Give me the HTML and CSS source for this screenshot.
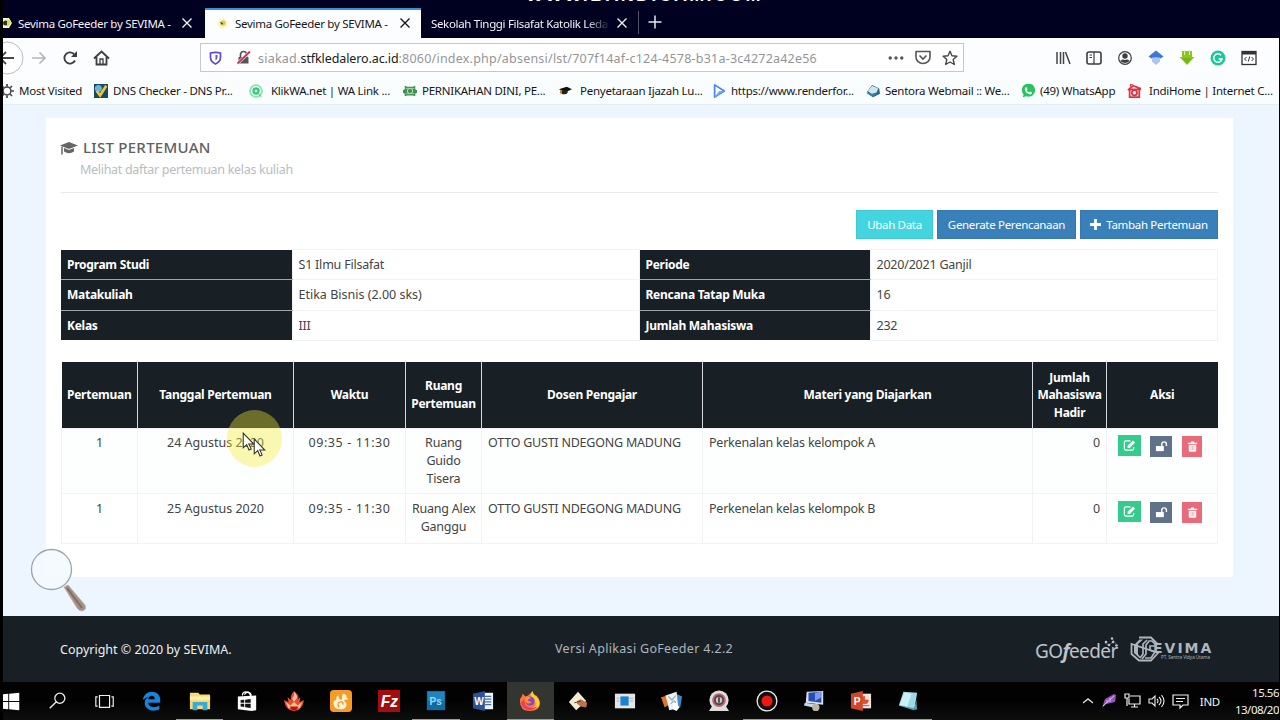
FILE: index.html
```
<!DOCTYPE html>
<html lang="id">
  <head>
    <meta charset="UTF-8" />
    <meta name="viewport" content="width=device-width, initial-scale=1.0" />
    <title>Sevima GoFeeder by SEVIMA</title>
    <link rel="stylesheet" href="styles.css">
  </head>
  <body>
    <svg class="defs" width="0" height="0">
      <symbol id="i-close" viewBox="0 0 12 12"><path d="M1.5 1.5l9 9M10.5 1.5l-9 9" fill="none" stroke="currentColor" stroke-width="1.4" /></symbol>
      <symbol id="i-edit" viewBox="0 0 14 14"><path d="M8 2H3.2Q1.5 2 1.5 3.6v7Q1.5 12 3.2 12h6.600q1.600 0 1.600-1.400V8.500" fill="none" stroke="currentColor" stroke-width="1.300" /><path d="M5 9.700V7.300L10.700 1.500 13 3.800 7.300 9.700z" fill="currentColor" /></symbol>
      <symbol id="i-unlock" viewBox="0 0 14 14"><path d="M1 6.500h8.500V12H1z" fill="currentColor" /><path d="M7.300 7V4.500a2.500 2.500 0 0 1 5 0v2" fill="none" stroke="currentColor" stroke-width="1.500" /></symbol>
      <symbol id="i-trash" viewBox="0 0 14 14"><path d="M2 3h3l.5-1.500h3L9 3h3v1.300H2zM3 5h8v6.500q0 1.200-1.200 1.200H4.200Q3 12.700 3 11.500z" fill="currentColor" /><path d="M5.500 6.300v4.700M7 6.300v4.700M8.500 6.300v4.700" stroke="#ee9aa4" stroke-width=".7" /></symbol>
    </svg>

    <div class="screen">
      <div class="tabs">
        <div class="tab tab-first">
          <svg width="13" height="12" viewBox="0 0 13 12"><path d="M0 1h6l3 5-3 5H0z" fill="#f7f7d8" /><circle cx="2.500" cy="6" r="2.500" fill="#343420" /><path d="M4 2l4 2-1 4-3 2z" fill="#dce050" /></svg>
          <span class="tab-title">Sevima GoFeeder by SEVIMA -</span>
          <svg class="tab-close" width="12" height="12"><use href="#i-close" /></svg>
        </div>
        <div class="tab tab-active">
          <svg width="13" height="13" viewBox="0 0 13 13"><circle cx="6.500" cy="6.500" r="5" fill="#f9f5c0" /><circle cx="7" cy="6" r="2.600" fill="#dccb3a" /><path d="M4 5l3 1-1 2z" fill="#443d18" /></svg>
          <span class="tab-title">Sevima GoFeeder by SEVIMA -</span>
          <svg class="tab-close" width="12" height="12"><use href="#i-close" /></svg>
        </div>
        <div class="tab tab-last">
          <span class="tab-title tab-fade">Sekolah Tinggi Filsafat Katolik Leda</span>
          <svg class="tab-close" width="12" height="12"><use href="#i-close" /></svg>
        </div>
        <svg class="new-tab" width="14" height="14" viewBox="0 0 14 14"><path d="M7 .5v13M.5 7h13" stroke="#e6e6f0" stroke-width="1.500" /></svg>
        <div class="watermark">WWW.BANDICAM.COM</div>
      </div>

      <div class="toolbar">
        <div class="nav">
          <svg class="back" width="36" height="36" viewBox="0 0 36 36"><circle cx="18" cy="18" r="16" fill="#fff" stroke="#bcbcc0" /><path d="M25 18H11M17 12l-6 6 6 6" fill="none" stroke="#45454a" stroke-width="1.900" /></svg>
          <svg class="forward" width="16" height="16" viewBox="0 0 16 16"><path d="M1 8h13M8.500 2.500L14 8l-5.500 5.500" fill="none" stroke="#b5b5b8" stroke-width="1.700" /></svg>
          <svg class="reload" width="16" height="16" viewBox="0 0 16 16"><path d="M13 10.500A5.600 5.600 0 1 1 12.400 4.500" fill="none" stroke="#3d3d42" stroke-width="1.900" /><path d="M15 1v6H9z" fill="#3d3d42" /></svg>
          <svg width="17" height="16" viewBox="0 0 17 16"><path d="M1 8.500L8.500 1.500 16 8.500M3.500 7v7.500h10V7" fill="none" stroke="#3d3d42" stroke-width="1.800" /><path d="M7 14V9h3v5" fill="none" stroke="#3d3d42" stroke-width="1.300" /></svg>
        </div>
        <div class="urlbar">
          <svg class="shield" width="13" height="14" viewBox="0 0 13 14"><path d="M1.500 2q5-1.400 10 0v4.500q0 4.200-5 6.500-5-2.300-5-6.500z" fill="none" stroke="#5a4ec0" stroke-width="1.700" /><path d="M6.500 4v5.500Q8.500 8 8.500 6.500V4z" fill="#5a5ad0" /></svg>
          <svg class="insecure" width="16" height="15" viewBox="0 0 16 15"><path d="M2.500 7h10v6.500h-10z" fill="#56565a" /><path d="M4.500 7V4.500a3 3 0 0 1 6 0V7" fill="none" stroke="#56565a" stroke-width="1.700" /><path d="M1.500 13.500L14 1.500" stroke="#fff" stroke-width="3" /><path d="M1.500 13.500L14 1.500" stroke="#d52c50" stroke-width="1.800" /></svg>
          <span class="url">siakad.<b>stfkledalero.ac.id</b>:8060/index.php/absensi/lst/707f14af-c124-4578-b31a-3c4272a42e56</span>
          <svg width="16" height="6" viewBox="0 0 16 6"><g fill="#55555a"><circle cx="2.200" cy="3" r="1.700" /><circle cx="8" cy="3" r="1.700" /><circle cx="13.800" cy="3" r="1.700" /></g></svg>
          <svg class="pocket" width="16" height="15" viewBox="0 0 16 15"><path d="M1 1.500h14V7a7 6.500 0 0 1-14 0z" fill="none" stroke="#55555a" stroke-width="1.600" stroke-linejoin="round" /><path d="M4.500 5.500L8 9l3.500-3.500" fill="none" stroke="#55555a" stroke-width="1.700" /></svg>
          <svg width="16" height="16" viewBox="0 0 16 16"><path d="M8 1.300l2 4.500 4.900.5-3.700 3.300 1.100 4.900L8 12l-4.300 2.500 1.100-4.900L1.100 6.300 6 5.800z" fill="none" stroke="#45454a" stroke-width="1.400" stroke-linejoin="round" /></svg>
        </div>
        <div class="addons">
          <svg viewBox="0 0 16 16"><path d="M2 2v12M5.500 2v12M8.500 2v12M10.500 2l4.500 12" stroke="#45454a" stroke-width="1.500" /></svg>
          <svg viewBox="0 0 16 16"><rect x="1" y="2" width="14" height="12" rx="2" fill="none" stroke="#3d3d42" stroke-width="1.600" /><path d="M8 2v12M3.500 5H6M3.500 7.500H6" stroke="#3d3d42" stroke-width="1.200" /></svg>
          <svg viewBox="0 0 16 16"><circle cx="8" cy="8" r="6.300" fill="none" stroke="#3d3d42" stroke-width="1.200" /><circle cx="8" cy="6" r="2.700" fill="#3d3d42" /><path d="M3.500 11q1-2 2.500-1.500 2 .8 4 0 1.500-.5 2.500 1.500-4.500 4-9 0z" fill="#3d3d42" /></svg>
          <svg viewBox="0 0 16 16"><path d="M8 .5l7.500 6-3 2-4.500-1-4.500 1-3-2z" fill="#3f75d8" /><path d="M4 7.500h8v4l-4 3.500-4-3.500z" fill="#a9c4f5" /></svg>
          <svg viewBox="0 0 16 16"><path d="M3 1h10v6h2.500L8 15 .5 7H3z" fill="#8cc521" /><path d="M5.500 0v5M10.500 0v5" stroke="#d9efae" /><path d="M8 14l5-6H3z" fill="#76b516" /></svg>
          <svg viewBox="0 0 16 16"><circle cx="8" cy="8" r="7.500" fill="#19c89b" /><path d="M11 5.200A4.200 4.200 0 1 0 12 9H8.500" fill="none" stroke="#fff" stroke-width="1.500" /></svg>
          <svg viewBox="0 0 16 16"><rect x="1" y="1.500" width="14" height="13" fill="#fff" stroke="#333" stroke-width="1.300" /><path d="M1 3h14" stroke="#333" stroke-width="3" /><path d="M5.500 7L3.500 9l2 2M10.500 7l2 2-2 2M8.700 6.500l-1.400 5" fill="none" stroke="#333" /></svg>
        </div>
      </div>

      <div class="bookmarks">
        <div><svg viewBox="0 0 16 16"><circle cx="8" cy="8" r="4.500" fill="none" stroke="#444" stroke-width="1.800" /><path d="M8 0v3M8 13v3M0 8h3M13 8h3M2.300 2.300l2 2M11.700 11.700l2 2M2.300 13.700l2-2M11.700 4.300l2-2" stroke="#444" stroke-width="1.900" /></svg><span>Most Visited</span></div>
        <div><svg viewBox="0 0 16 16"><path d="M0 0h16v16H0z" fill="#174a68" /><circle cx="5" cy="5" r="4" fill="#6bb5d4" /><path d="M3 8l4 5L14 2" fill="none" stroke="#f3c431" stroke-width="3" /></svg><span>DNS Checker - DNS Pr...</span></div>
        <div class="wide"><svg viewBox="0 0 16 16"><circle cx="8" cy="8" r="6.800" fill="#fff" stroke="#86e4ae" stroke-width="2" /><circle cx="8" cy="8" r="4.200" fill="#35c979" /><path d="M6 6h4v4H6zM11 11l3 4" fill="#b9f2d0" stroke="#35c979" /></svg><span>KlikWA.net | WA Link ...</span></div>
        <div><svg viewBox="0 0 16 16"><path d="M2 2l3 1h6l3-1v4l2 1v3l-2 1v3l-3-1H5l-3 1v-3l-2-1V7l2-1z" fill="#3f9150" /><circle cx="8" cy="8" r="3" fill="none" stroke="#d4ead2" /><path d="M3 5h10M3 11h10" stroke="#a5d5a8" /></svg><span>PERNIKAHAN DINI, PE...</span></div>
        <div class="wide"><svg viewBox="0 0 16 16"><path d="M1 6l9-3 6 3-7 3z" fill="#111" /><path d="M4 7v4q5 2 7-1V7z" fill="#26211b" /><path d="M3 7v4" stroke="#c48736" stroke-width="1.500" /></svg><span>Penyetaraan Ijazah Lu...</span></div>
        <div><svg viewBox="0 0 16 16"><path d="M3 1l11 7-11 7z" fill="#fff" stroke="#4c86f4" stroke-width="2" stroke-linejoin="round" /><path d="M3 15l5-7 6 0z" fill="#76a5fa" /></svg><span>https://www.renderfor...</span></div>
        <div><svg viewBox="0 0 16 16"><path d="M1 9l6-8 8 4 1 6-8 4z" fill="#246282" /><path d="M2 8l5-6 7 3-2 5-5 2z" fill="#cfe5f0" /><path d="M0 10l7 1 7-2-6 6z" fill="#347ba5" /></svg><span>Sentora Webmail :: We...</span></div>
        <div><svg viewBox="0 0 16 16"><path d="M2 15l1-3a7.500 7.500 0 1 1 3 2z" fill="#25c45d" /><path d="M5 4l1.500-.2L7.500 6 6.600 7q1 2 2.800 2.600l1.100-1 2 1q0 2-2 2.300Q5.300 11 4.300 6z" fill="#fff" /></svg><span>(49) WhatsApp</span></div>
        <div class="wide"><svg viewBox="0 0 16 16"><path d="M1 7l6-5 8 3v1H3v9h11V6" fill="none" stroke="#df3341" stroke-width="2" /><circle cx="8.500" cy="10" r="3" fill="#fff" stroke="#df3341" stroke-width="2" /><path d="M4 3V0h3" stroke="#df3341" stroke-width="1.500" fill="none" /></svg><span>IndiHome | Internet C...</span></div>
      </div>

      <div class="page">
        <div class="card">
          <div class="card-header">
            <h1 class="title">
              <svg width="18" height="13" viewBox="0 0 18 13"><path d="M9 0l9 3.500L9 7 0 3.500z" fill="#666" /><path d="M4 6l5 2 5-2v3.500q-5 3.500-10 0z" fill="#666" /><path d="M2 4.500v8" stroke="#666" stroke-width="1.500" /></svg>
              <span>LIST PERTEMUAN</span>
            </h1>
            <p class="subtitle">Melihat daftar pertemuan kelas kuliah</p>
          </div>
          <div class="actions">
            <button class="btn btn-info">Ubah Data</button>
            <button class="btn btn-generate">Generate Perencanaan</button>
            <button class="btn btn-add"><svg width="11" height="11" viewBox="0 0 11 11"><path d="M5.500 0v11M0 5.500h11" stroke="#fff" stroke-width="2.800" /></svg><span>Tambah Pertemuan</span></button>
          </div>

          <table class="info">
            <colgroup><col class="c-label"><col class="c-value"><col class="c-label"><col></colgroup>
            <tr><th>Program Studi</th><td>S1 Ilmu Filsafat</td><th>Periode</th><td>2020/2021 Ganjil</td></tr>
            <tr><th>Matakuliah</th><td class="course">Etika Bisnis (2.00 sks)</td><th>Rencana Tatap Muka</th><td>16</td></tr>
            <tr><th>Kelas</th><td>III</td><th>Jumlah Mahasiswa</th><td>232</td></tr>
          </table>

          <table class="meetings">
            <colgroup><col class="c-no"><col class="c-date"><col class="c-time"><col class="c-room"><col class="c-teacher"><col class="c-topic"><col class="c-count"><col></colgroup>
            <thead>
              <tr>
                <th>Pertemuan</th><th>Tanggal Pertemuan</th><th>Waktu</th><th>Ruang<br>Pertemuan</th>
                <th>Dosen Pengajar</th><th>Materi yang Diajarkan</th><th>Jumlah<br>Mahasiswa<br>Hadir</th><th>Aksi</th>
              </tr>
            </thead>
            <tbody>
              <tr class="row-first">
                <td class="center">1</td><td class="center date">24 Agustus 2020</td><td class="center time">09:35 - 11:30</td><td class="center">Ruang<br>Guido<br>Tisera</td>
                <td>OTTO GUSTI NDEGONG MADUNG</td><td>Perkenalan kelas kelompok A</td><td class="right">0</td>
                <td><div class="row-actions"><a class="edit"><svg><use href="#i-edit" /></svg></a><a class="unlock"><svg><use href="#i-unlock" /></svg></a><a class="trash"><svg><use href="#i-trash" /></svg></a></div></td>
              </tr>
              <tr class="row-second">
                <td class="center">1</td><td class="center date">25 Agustus 2020</td><td class="center time">09:35 - 11:30</td><td class="center">Ruang Alex<br>Ganggu</td>
                <td>OTTO GUSTI NDEGONG MADUNG</td><td>Perkenelan kelas kelompok B</td><td class="right">0</td>
                <td><div class="row-actions"><a class="edit"><svg><use href="#i-edit" /></svg></a><a class="unlock"><svg><use href="#i-unlock" /></svg></a><a class="trash"><svg><use href="#i-trash" /></svg></a></div></td>
              </tr>
            </tbody>
          </table>
        </div>
      </div>

      <div class="footer">
        <span class="copyright">Copyright © 2020 by SEVIMA.</span>
        <span class="version">Versi Aplikasi GoFeeder 4.2.2</span>
        <div class="logos">
          <div class="gofeeder">GO<i>f</i>eeder
            <svg class="dots" width="14" height="11" viewBox="0 0 14 11"><path d="M1 6l4 2 4-3M8 1l5 8" stroke="#727a81" stroke-width=".7" fill="none" /><g fill="#bdc3c8"><circle cx="2" cy="5" r="1.300" /><circle cx="5" cy="8" r="1.300" /><circle cx="8" cy="1.500" r="1.200" /><circle cx="9" cy="5" r="1.200" /><circle cx="12.500" cy="8.500" r="1.300" /></g></svg>
          </div>
          <div class="sevima">
            <svg width="31" height="26" viewBox="0 0 31 26"><path d="M9 1.500h12l7 7M28 17l-7 7.500H9L1.500 18V8z" fill="none" stroke="#aeb5bb" stroke-width="1.800" /><path d="M13 3.500H9.500L4 9v8l5.500 5H11l-3-4V8z" fill="#aeb5bb" /><path d="M17 4l-4 4v10l-3 4M26 9l-4-4h-3l-3 4v9l-4 5M26 10h-6v4l5 2-4 6h-6" fill="none" stroke="#aeb5bb" stroke-width="1.700" /></svg>
            <div class="sevima-text"><b>EVIMA</b><small>PT. Sentra Vidya Utama</small></div>
          </div>
        </div>
      </div>

      <div class="taskbar">
        <div class="apps">
          <div><svg viewBox="0 0 24 24"><path d="M0 5l9-1v8H0zM10 4l11-1v9H10zM0 13h9v8l-9-1zM10 13h11v9l-11-1z" fill="#fff" /></svg></div>
          <div><svg viewBox="0 0 24 24"><circle cx="14" cy="9" r="5.500" fill="none" stroke="#eee" stroke-width="1.400" /><path d="M10.500 12.500L3 20" stroke="#eee" stroke-width="1.500" /></svg></div>
          <div><svg viewBox="0 0 24 24"><path d="M6 6h11v13H6zM4 7.500H2v10h2M19 7.500h2v10h-2" fill="none" stroke="#eee" stroke-width="1.300" /></svg></div>
          <div><svg viewBox="0 0 24 24"><path d="M2 11C3 5 7 2 12 2c6 0 9 4 9 9v3H8c0 5 7 6 12 3v4C12 25 4 21 4 14q0-5 6-7-4 0-8 4zm6-1h7c0-5-6-5-7 0z" fill="#1684d8" /></svg></div>
          <div class="running"><svg viewBox="0 0 24 24"><path d="M1 3h9l2 2h11v16H1z" fill="#f4d879" /><path d="M4 13h16v9h-5v-5H9v5H4z" fill="#35acd8" /><path d="M1 7h22v4H1z" fill="#ffec9e" /></svg></div>
          <div><svg viewBox="0 0 24 24"><path d="M2 7l20-1v16l-5 1-15-2z" fill="#fff" /><path d="M7 6q0-4 4-4t5 5M9 5q5-6 8 1" fill="none" stroke="#fff" stroke-width="1.300" /><path d="M5 11l4-.5V14H5zM10 10.500l6-.7V14h-6zM5 15h4v3.500L5 18zM10 15h6v4.500l-6-.7z" fill="#111" /></svg></div>
          <div><svg viewBox="0 0 24 24"><path d="M12 1q7 6 4 9l3-2-1 5 5-2q-2 12-11 12T1 11l5 2-1-5 4 3Q7 7 12 1z" fill="#e84c32" /><path d="M12 2q1 5-2 7l2 4 3-4q1-3-3-7zM3 13l5 4 4-4 4 4 5-4-3 7H6z" fill="#ffc693" /><path d="M7 18h10l-3 4h-4z" fill="#b81416" /></svg></div>
          <div><svg viewBox="0 0 24 24"><rect x="0" y="0" width="24" height="24" rx="4" fill="#f69b25" /><path d="M14 4q4 0 4 4l2 2-5 1 3 4q0 6-6 6-7 0-8-5-1-5 3-5-1-5 3-5-2 3 2 5 2-1 1-4z" fill="#fff4d9" /><path d="M10 19q-3-5 1-6t3 3" fill="none" stroke="#f69b25" stroke-width="1.500" /></svg></div>
          <div><svg viewBox="0 0 24 24"><path d="M0 0h24v24H0z" fill="#a40c0d" /><text x="3" y="19" class="fz">Fz</text></svg></div>
          <div class="running"><svg viewBox="0 0 24 24"><path d="M2 1h20v21H2z" fill="#156aa0" /><path d="M3 2h18v10H3z" fill="#2384bd" /><text x="5" y="16" class="ps">Ps</text></svg></div>
          <div><svg viewBox="0 0 24 24"><path d="M12 3h11v18H12z" fill="#eef3fb" /><path d="M14 7h7M14 10h7M14 13h7M14 16h7" stroke="#426fae" stroke-width="1.400" /><path d="M1 4l13-3v22L1 20z" fill="#295598" /><text x="2.500" y="16" class="office">W</text></svg></div>
          <div class="running selected"><svg viewBox="0 0 24 24"><path d="M4 4l3 3 3-1 5-5q0 4 4 5 4 4 4 9-1 8-11 8Q1 23 1 12q0-3 2-5z" fill="#ff773c" /><path d="M15 1q0 4 4 6 4 4 3 10-4 6-12 4 9-1 8-7-1-5-5-7-1-3 2-6z" fill="#ffcc35" /><path d="M2 14q2 8 9 8 6 0 9-4-8 3-13-1L6 9z" fill="#f23d63" /><circle cx="12" cy="12" r="5" fill="#7e4bc4" /><path d="M6 9q5-4 7 0-3 0-3 3l4 1q-4 4-8-1z" fill="#ff8f35" /></svg></div>
          <div><svg viewBox="0 0 24 24"><path d="M12 2l9 10-11 10L2 13z" fill="#f3ecd3" /><path d="M11 12l4-2 7 4-1 5-6-1-4-3z" fill="#bd7151" /><path d="M8 14l7-2" stroke="#503626" /></svg></div>
          <div><svg viewBox="0 0 24 24"><path d="M1 4h22v16H1z" fill="#e4e5e7" /><path d="M7 7h9v10H7z" fill="#1684cf" /><path d="M3 9h3M3 12h3M17 9h4M17 12h4" stroke="#a7a8ac" /></svg></div>
          <div><svg viewBox="0 0 24 24"><path d="M0 8l7-2 3 9-6 4z" fill="#dd7625" /><path d="M14 3l9 4-2 12-7 1z" fill="#398bc5" /><path d="M5 6l12-4 2 18-10 2z" fill="#edf1f5" /><path d="M8 7l4 4 4-5M11 15q4-6 5 0" fill="none" stroke="#8da5b2" stroke-width="1.300" /><path d="M13 15l4-1 3 5-3 4-4-2z" fill="#fff" /></svg></div>
          <div><svg viewBox="0 0 24 24"><path d="M5 17h14l4 6H1z" fill="#ddd" /><circle cx="12" cy="11" r="10.500" fill="#e0dfde" /><circle cx="12" cy="11" r="6.500" fill="#554448" stroke="#bd6872" stroke-width="2" /><circle cx="12" cy="11" r="3.500" fill="#cacaca" /><path d="M12 8v6" stroke="#301b20" stroke-width="1.500" /></svg></div>
          <div class="running"><svg viewBox="0 0 24 24"><circle cx="12" cy="12" r="10.800" fill="#101010" stroke="#eee" stroke-width="1.400" /><circle cx="12" cy="12" r="6" fill="#ef1812" /></svg></div>
          <div class="running"><svg viewBox="0 0 24 24"><path d="M4 2l18-1v15L3 14z" fill="#d8dfed" /><path d="M6 3l14-1v12L6 12z" fill="#294bb5" /><path d="M13 3l7-1v6l-7 4z" fill="#779de8" /><path d="M2 14l15 2-2 4-14-3z" fill="#c8d7eb" /><circle cx="14" cy="19" r="4" fill="#bbb5a1" /></svg></div>
          <div class="running"><svg viewBox="0 0 24 24"><path d="M12 4h11v16H12z" fill="#f6e1dc" /><path d="M16 7a4 4 0 1 0 4 4h-4zM14 17h7" fill="#d55435" stroke="#d55435" /><path d="M1 4l13-3v22L1 20z" fill="#cf4726" /><text x="4" y="16" class="office">P</text></svg></div>
          <div class="running"><svg viewBox="0 0 24 24"><path d="M7 2l15 1-3 18-17-4z" fill="#9bd9e8" /><path d="M8 3l8 1-5 14-8-2z" fill="#cdf1f3" /><path d="M2 17l17 3 2-10 1 11-4 1z" fill="#5297aa" /></svg></div>
        </div>
        <div class="tray">
          <svg width="12" height="8" viewBox="0 0 12 8"><path d="M1 6l5-4 5 4" fill="none" stroke="#ddd" stroke-width="1.400" /></svg>
          <svg width="16" height="16" viewBox="0 0 16 16"><path d="M1 15L4 6l9-5 2 1-1 7-9 2z" fill="#9655bb" /><path d="M2 13L13 3M6 7v3M9 5v4" stroke="#dcb6ed" /></svg>
          <svg width="17" height="16" viewBox="0 0 17 16"><path d="M6 3h10v8H5V6M7 14h7M10.500 11v3M1 1h4v4H1zM3 5v8" fill="none" stroke="#eee" stroke-width="1.200" /></svg>
          <svg width="17" height="16" viewBox="0 0 17 16"><path d="M1 6h3l3-3v10l-3-3H1z" fill="none" stroke="#eee" stroke-width="1.100" /><path d="M9 6q2 2 0 4M11 4q4 4 0 8M13.500 2q5 6 0 12" fill="none" stroke="#eee" stroke-width="1.100" /></svg>
          <svg width="17" height="17" viewBox="0 0 17 17"><path d="M1 2h15v10h-5l-3 3v-3H1zM4 5.500h9M4 8.500h7" fill="none" stroke="#eee" stroke-width="1.200" /></svg>
          <span class="lang">IND</span>
          <div class="clock"><span>15.56</span><span>13/08/20</span></div>
        </div>
      </div>

      <!-- pointer highlight and screen magnifier -->
      <div class="pointer-glow"></div>
      <svg class="pointer pointer-a" viewBox="0 0 12 18"><path d="M1 1v14l3.300-3 2.200 5 2-1-2.200-4.600H11z" fill="#fffff2" stroke="#333" /></svg>
      <svg class="pointer pointer-b" viewBox="0 0 12 18"><path d="M1 1v14l3.300-3 2.200 5 2-1-2.200-4.600H11z" fill="#fff" stroke="#333" /></svg>
      <svg class="magnifier" viewBox="0 0 58 66"><circle cx="21.500" cy="21.500" r="20" fill="#f3f9fe" fill-opacity=".85" stroke="#9ca4ab" stroke-width="1.300" /><path d="M34 39l4-2 17 20q2 5-3 6-3 0-5-3z" fill="#a68f86" stroke="#c4b5af" /><path d="M37 40l15 20" stroke="#7c6963" stroke-width="1.500" /></svg>
    </div>
  </body>
</html>
```
FILE: styles.css
```
* {
  margin: 0;
  padding: 0;
  box-sizing: border-box;
}

body {
  background: #000;
  overflow: hidden;
}

.defs {
  display: block;
}

svg {
  flex-shrink: 0;
}

.screen {
  position: relative;
  width: 1280px;
  height: 720px;
  border-left: 3px solid #000;
  border-right: 1px solid #000;
  overflow: hidden;
  font-family: "Noto Sans", sans-serif;
  white-space: nowrap;
}

/* Browser tabs */
.tabs {
  position: relative;
  display: flex;
  align-items: flex-end;
  height: 38px;
  background: #000021;
  overflow: hidden;
}

.tab {
  display: flex;
  align-items: center;
  height: 30px;
  color: #f2f2f5;
  font-size: 11.5px;
}

.tab-title {
  letter-spacing: -0.3px;
}

.tab-first {
  width: 202px;
}

.tab-first .tab-title {
  width: 162px;
  margin-left: 2px;
}

.tab-active {
  width: 216px;
  padding: 0 0 2px 11px;
  background: #fcfdfe;
  border-top: 2px solid #3b8fd9;
  color: #16161b;
}

.tab-active .tab-title {
  width: 163px;
  margin-left: 6px;
}

.tab-last {
  width: 219px;
  padding-left: 10px;
  position: relative;
}

.tab-last .tab-title {
  width: 180px;
  margin-right: 5px;
  letter-spacing: -0.34px;
}

.tab-last::after {
  content: "";
  position: absolute;
  right: 1px;
  top: 3px;
  width: 1px;
  height: 23px;
  background: #555568;
}

.tab-first .tab-close,
.tab-active .tab-close {
  margin-left: 1px;
}

.tab-fade {
  -webkit-mask-image: linear-gradient(90deg, #000 86%, transparent);
  mask-image: linear-gradient(90deg, #000 86%, transparent);
}

.new-tab {
  margin: 0 0 9px 8px;
}

.watermark {
  position: absolute;
  left: 523px;
  top: -15px;
  font: bold 18px/20px "Liberation Sans", sans-serif;
  color: #fff;
  letter-spacing: 2.3px;
}

/* Navigation */
.toolbar {
  display: flex;
  align-items: center;
  height: 39px;
  background: #fbfdfe;
}

.nav {
  display: flex;
  align-items: center;
  width: 197px;
}

.back {
  margin-left: -14px;
}

.forward {
  margin-left: 6px;
}

.reload {
  margin: 0 15px;
}

.urlbar {
  display: flex;
  align-items: center;
  width: 764px;
  height: 29px;
  padding-left: 8px;
  background: #fff;
  border: 1px solid #c6c8ca;
}

.insecure {
  margin-left: 14px;
}

.url {
  width: 630px;
  margin-left: 6px;
  padding-top: 1px;
  color: #939599;
  font-size: 12.5px;
  letter-spacing: 0.22px;
}

.url b {
  font-weight: 400;
  color: #202024;
  letter-spacing: -0.1px;
}

.pocket {
  margin: 0 11px;
}

.addons {
  display: flex;
  gap: 15px;
  margin-left: 91px;
}

.addons svg {
  width: 16px;
  height: 16px;
}

/* Bookmarks */
.bookmarks {
  display: grid;
  grid-template-columns: 94px 155px 154px 155px 154px 154px 155px 106px 152px;
  height: 28px;
  margin-left: -3px;
  background: #f9fdfe;
  border-bottom: 1px solid #e1eef4;
  font-size: 11.5px;
  letter-spacing: -0.25px;
  color: #17171b;
}

.bookmarks div {
  display: flex;
  align-items: center;
}

.bookmarks svg {
  width: 14px;
  height: 14px;
  margin-right: 5px;
}

.bookmarks .wide svg {
  margin-right: 8px;
}

/* Page */
.page {
  height: 511px;
  padding: 13px 46px 0 43px;
  background: #edf6fe;
  font-size: 12.5px;
  color: #444;
}

.card {
  height: 459px;
  padding: 0 15px;
  background: #fff;
}

.card-header {
  height: 75px;
  padding-top: 19px;
  border-bottom: 1px solid #eaeaea;
}

.title {
  display: flex;
  align-items: center;
  gap: 5px;
  height: 20px;
  font-size: 15px;
  font-weight: 500;
  letter-spacing: 0.28px;
  color: #606060;
}

.title svg {
  margin: 2px 0 0 -1px;
}

.subtitle {
  padding: 4px 0 0 19px;
  line-height: 18px;
  letter-spacing: -0.3px;
  color: #b7bdc2;
}

.actions {
  display: flex;
  justify-content: flex-end;
  gap: 4px;
  margin-top: 17px;
}

.btn {
  display: flex;
  align-items: center;
  justify-content: center;
  gap: 5px;
  height: 29px;
  border: none;
  background: #3980ba;
  color: #fff;
  font: 11.5px "Noto Sans", sans-serif;
  letter-spacing: -0.32px;
  white-space: nowrap;
  box-shadow: inset 0 0 0 1px rgba(0, 0, 0, 0.06);
}

.btn-info {
  width: 77px;
  background: #43d5df;
}

.btn-generate {
  width: 139px;
}

.btn-add {
  width: 138px;
}

table {
  width: 1157px;
  border-collapse: collapse;
  table-layout: fixed;
}

th {
  background: #182026;
  color: #fff;
  font-size: 12px;
  font-weight: 700;
  letter-spacing: -0.27px;
}

td {
  border: 1px solid #f0f3f5;
  letter-spacing: -0.22px;
}

.info {
  margin: 10px 0 21px;
}

.info tr {
  height: 30.3px;
}

.info th,
.info td {
  padding: 0 6px;
  text-align: left;
}

.info th {
  border-bottom: 1px solid #a2a6a9;
}

.info tr:last-child th {
  border-bottom: none;
}

.info .course {
  letter-spacing: 0;
}

.c-label {
  width: 231px;
}

.c-value {
  width: 347px;
}

/* Meetings table */
.meetings th {
  height: 67px;
  border-left: 1px solid #d6d8da;
  line-height: 17.7px;
}

.meetings th:first-child {
  border-left: none;
}

.meetings td {
  padding: 5px 6px;
  line-height: 17.7px;
  vertical-align: top;
}

.row-first {
  height: 65px;
  background: #fdfefe;
}

.row-second {
  height: 50px;
}

.meetings .row-second td {
  padding-top: 6px;
}

.c-no {
  width: 76px;
}

.c-date {
  width: 156px;
}

.c-time {
  width: 112px;
}

.c-room {
  width: 76px;
}

.c-teacher {
  width: 221px;
}

.c-topic {
  width: 330px;
}

.c-count {
  width: 74px;
}

.center {
  text-align: center;
}

.right {
  text-align: right;
}

.date {
  letter-spacing: 0;
}

.time {
  letter-spacing: 0.6px;
}

.row-actions {
  display: flex;
  gap: 9px;
  padding: 1px 0 0 5px;
}

.row-actions a {
  display: flex;
  align-items: center;
  justify-content: center;
  width: 22px;
  height: 21px;
  margin-top: 1px;
  color: #fff;
}

.row-actions svg {
  width: 13px;
  height: 13px;
}

.row-actions .edit {
  width: 23px;
  margin-top: 0;
  background: #35cb8c;
}

.row-actions .unlock {
  background: #60728a;
}

.row-actions .trash {
  width: 20px;
  margin-left: 1px;
  background: #eb6a79;
}

/* Footer */
.footer {
  display: flex;
  align-items: center;
  height: 66px;
  padding-left: 57px;
  background: #182026;
  color: #eef0f1;
  font-size: 12.5px;
}

.copyright {
  width: 495px;
}

.version {
  width: 480px;
  padding-bottom: 2px;
  color: #aeb6bb;
  letter-spacing: 0.32px;
}

.logos {
  display: flex;
  align-items: center;
  gap: 11px;
}

.gofeeder {
  position: relative;
  width: 84px;
  padding-top: 3px;
  color: #bdc3c8;
  font-size: 19px;
  letter-spacing: -0.6px;
}

.gofeeder i {
  font-weight: 700;
}

.dots {
  position: absolute;
  right: 1px;
  top: 2px;
}

.sevima {
  display: flex;
  align-items: center;
  color: #aeb5bb;
}

.sevima-text {
  display: flex;
  flex-direction: column;
  margin: 3px 0 0 -8px;
}

.sevima-text b {
  font: bold 14px/13px "DejaVu Sans", sans-serif;
  letter-spacing: 2px;
}

.sevima-text small {
  margin-left: 8px;
  font-size: 4.5px;
  line-height: 5px;
}

/* Taskbar */
.taskbar {
  display: flex;
  justify-content: space-between;
  height: 38px;
  background: linear-gradient(#020202 50%, #0c0e0c);
  color: #f2f2f2;
}

.apps {
  display: flex;
  margin-left: -16px;
}

.apps div {
  display: flex;
  align-items: center;
  justify-content: center;
  width: 47.25px;
  border-bottom: 1px solid transparent;
}

.apps svg {
  width: 22px;
  height: 22px;
}

.apps .running {
  border-bottom-color: #77a5cf;
}

.apps .selected {
  background: #333531;
}

.fz {
  font: italic bold 17px "Liberation Sans", sans-serif;
  fill: #fff;
}

.ps {
  font: bold 11px "Liberation Sans", sans-serif;
  fill: #8fdcff;
}

.office {
  font: bold 11px "Liberation Sans", sans-serif;
  fill: #fff;
}

.tray {
  display: flex;
  align-items: center;
  gap: 7px;
}

.lang {
  margin-left: 4px;
  font-size: 11.5px;
  letter-spacing: -0.3px;
}

.clock {
  display: flex;
  flex-direction: column;
  align-items: flex-end;
  margin-left: 8px;
  font-size: 11.5px;
  line-height: 17px;
  letter-spacing: -0.5px;
}

/* Pointer and magnifier overlays */
.pointer-glow {
  position: absolute;
  left: 224px;
  top: 410px;
  width: 55px;
  height: 57px;
  border-radius: 50%;
  background: rgba(245, 240, 50, 0.38);
}

.pointer {
  position: absolute;
  width: 13px;
  height: 19px;
}

.pointer-a {
  left: 239px;
  top: 432px;
}

.pointer-b {
  left: 250px;
  top: 438px;
}

.magnifier {
  position: absolute;
  left: 27px;
  top: 548px;
  width: 58px;
  height: 66px;
}
```
